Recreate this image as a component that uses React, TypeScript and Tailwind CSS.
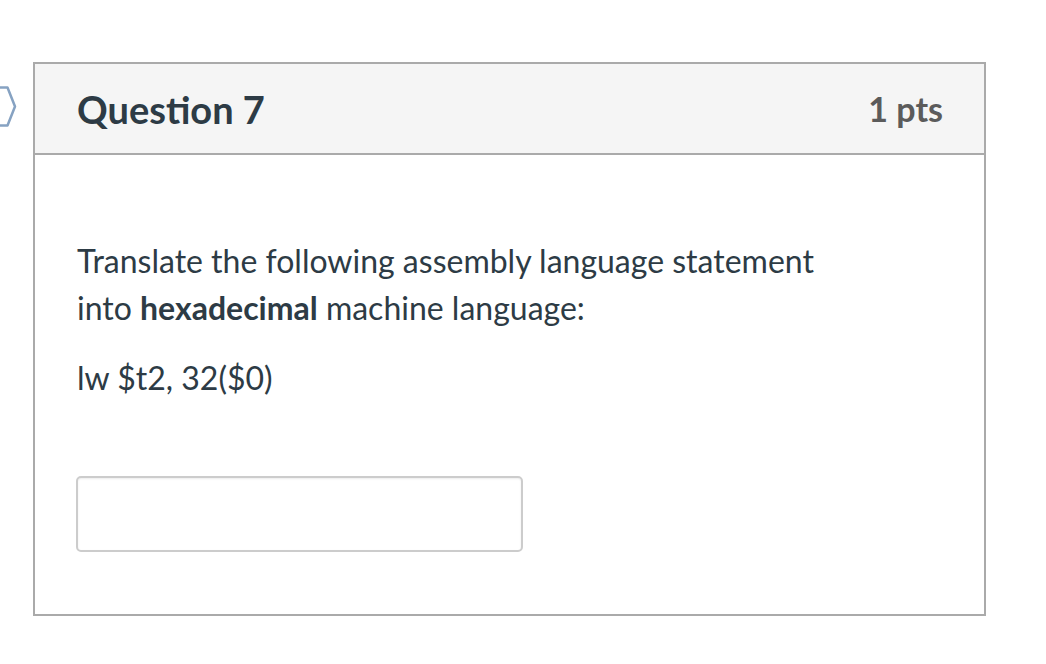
import React from 'react';

function BookmarkIcon() {
    return (
        <svg width="28" height="42" viewBox="0 0 28 42" className="ml-[-10px] mt-[24px] shrink-0" fill="none">
            <path d="M0 1.5 H17.5 L25 20.5 L17.5 39.5 H0" stroke="#86a2c2" strokeWidth="2.5" strokeLinejoin="round" />
        </svg>
    );
}

export default function App() {
    return (
        <div className="min-h-[664px] w-[1046px] overflow-hidden bg-white pt-[62px] font-['Lato',sans-serif] text-[#2d3b45]">
            <div className="flex items-start">
                <div className="flex w-[33px] shrink-0 overflow-hidden">
                    <BookmarkIcon />
                </div>

                <div className="w-[953px] border-2 border-[#aaaaaa]">
                    {/* Header */}
                    <div className="flex h-[91px] items-center justify-between border-b-2 border-[#aaaaaa] bg-[#f5f5f5] pl-[42px] pr-[41px]">
                        <h2 className="text-[38px] font-bold leading-none">Question 7</h2>
                        <div className="text-[34px] font-bold leading-none text-[#5b5b5b]">1 pts</div>
                    </div>

                    {/* Body */}
                    <div className="px-[41px] pb-[62px] pt-[82px] text-[32px] leading-[47px]">
                        <p className="pl-[1px]">
                            Translate the following assembly language statement
                            <br />
                            into <strong className="font-bold">hexadecimal</strong> machine language:
                        </p>
                        <p className="mt-[23px] pl-[1px]">lw $t2, 32($0)</p>

                        <input
                            type="text"
                            className="mt-[75px] block h-[76px] w-[447px] rounded-[5px] border-2 border-[#cccccc] bg-white shadow-[inset_0_1px_2px_rgba(0,0,0,0.08)] outline-none"
                        />
                    </div>
                </div>
            </div>
        </div>
    );
}
